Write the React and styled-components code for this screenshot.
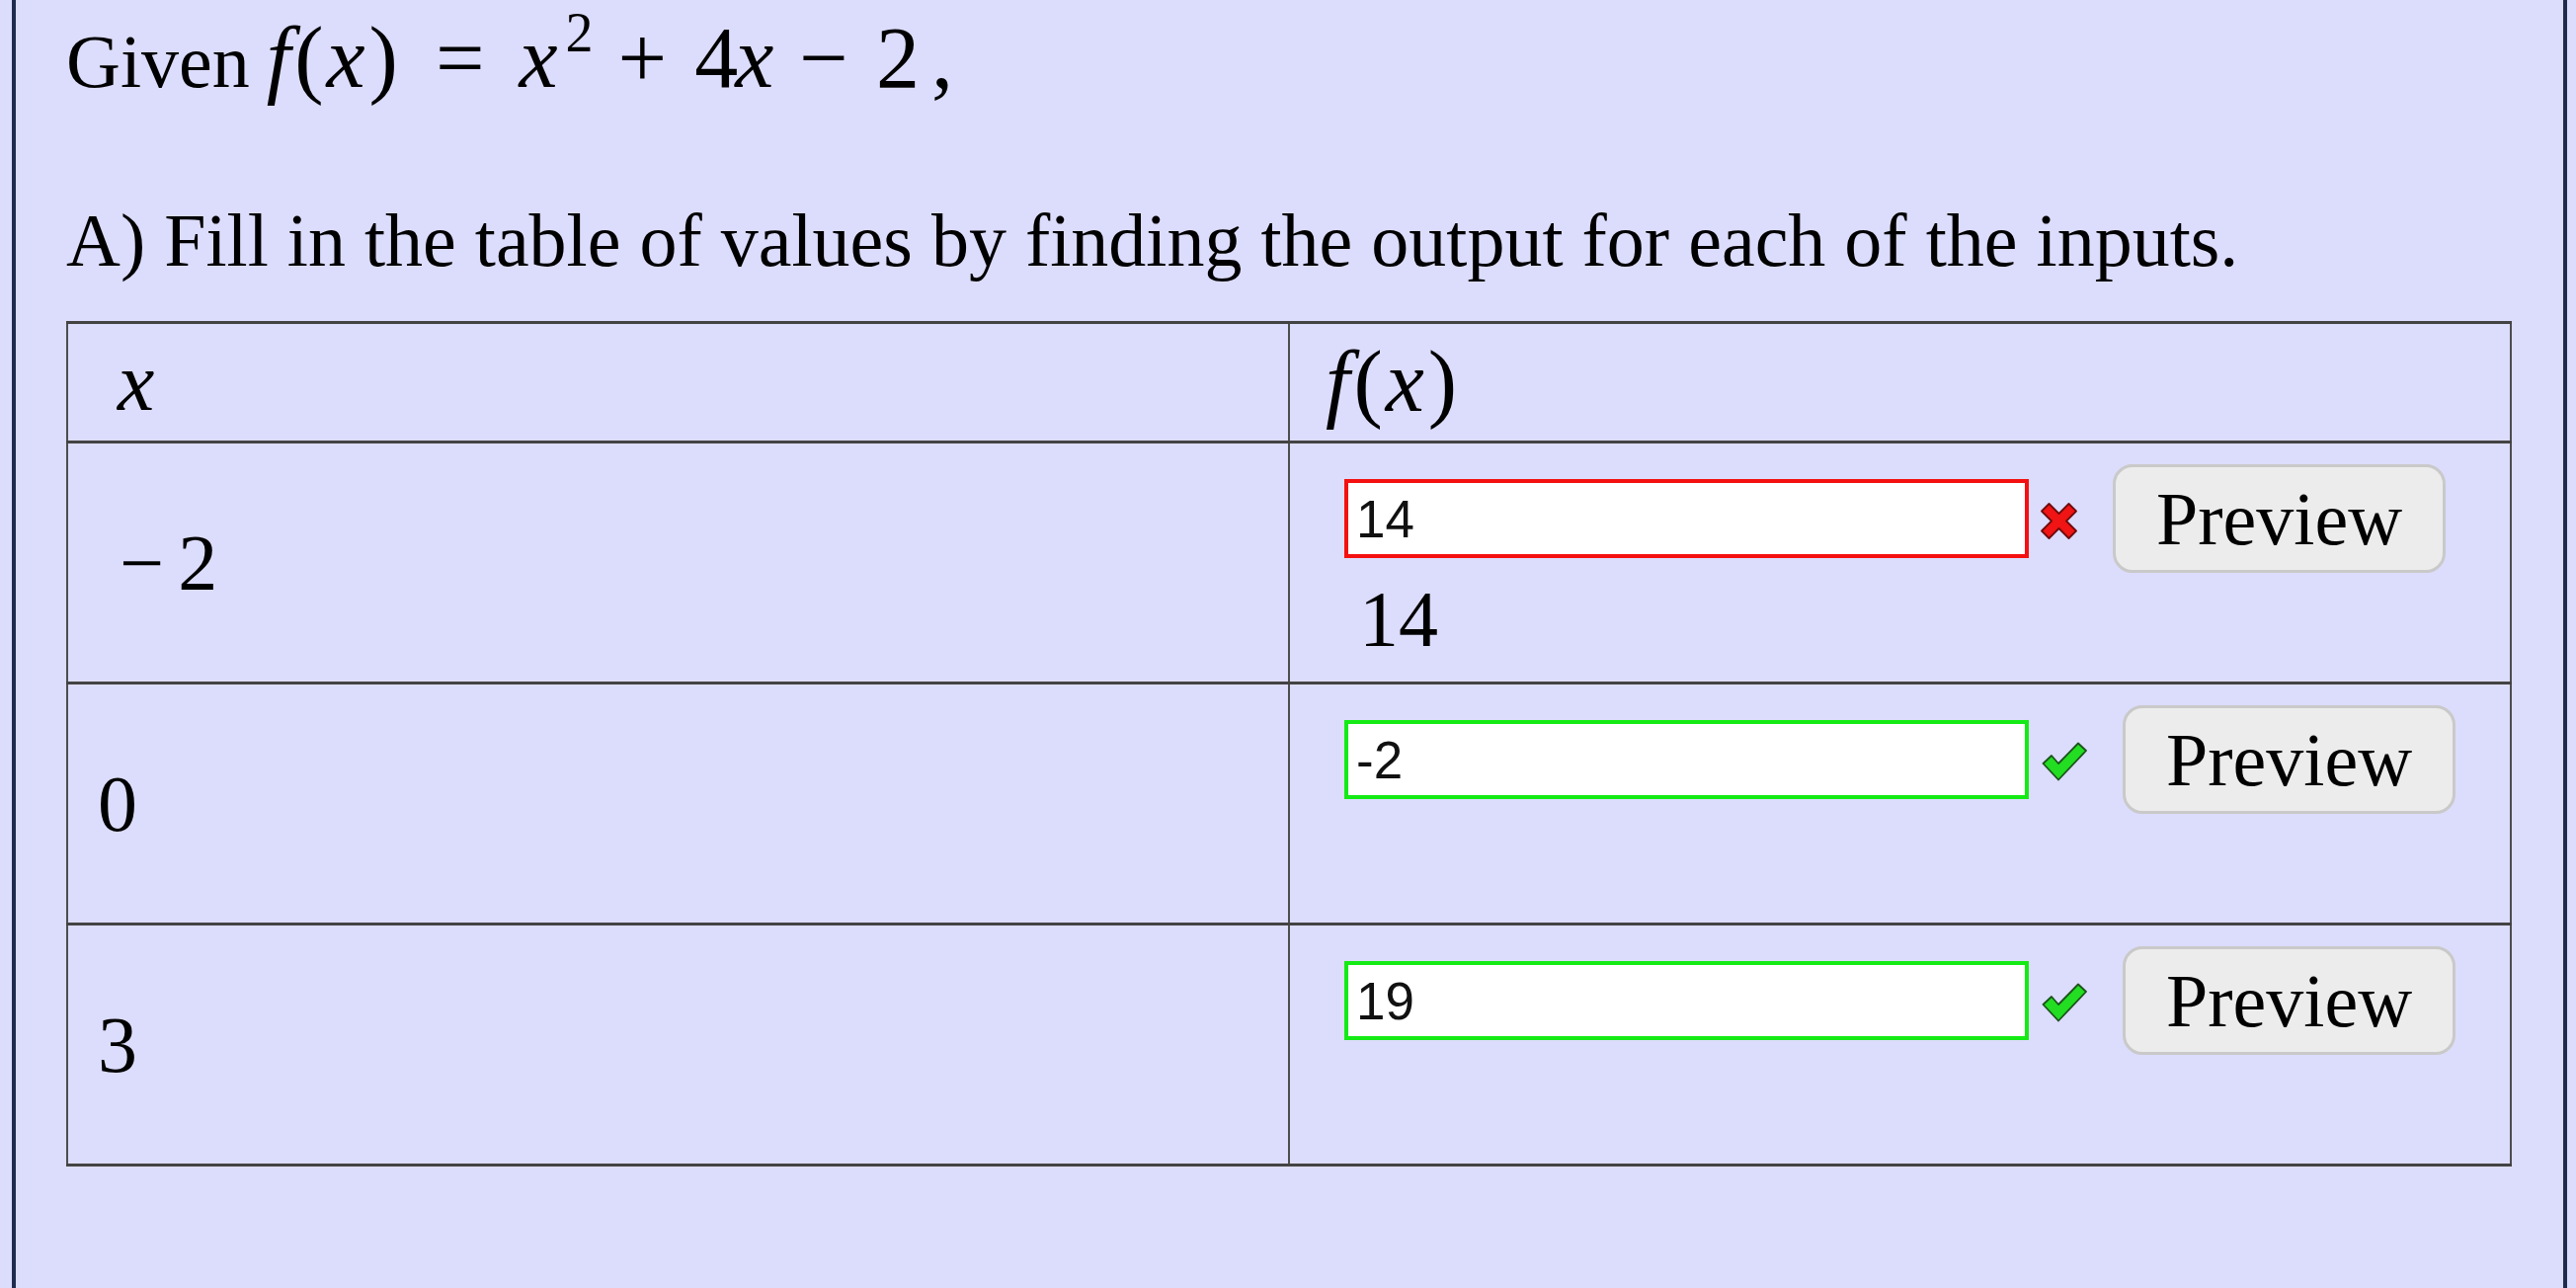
import React from 'react';
import styled, { createGlobalStyle } from 'styled-components';

const GlobalStyle = createGlobalStyle`
  html, body {
    margin: 0;
    padding: 0;
    background: #dcdcfc;
    overflow: hidden;
  }
  body {
    font-family: 'Liberation Serif', 'Times New Roman', serif;
    color: #000;
  }
`;

const rows = [
  { x: '−2', indent: true, value: '14', status: 'wrong', preview: '14' },
  { x: '0', indent: false, value: '-2', status: 'right', preview: '' },
  { x: '3', indent: false, value: '19', status: 'right', preview: '' },
];

export default function App() {
  return (
    <>
      <GlobalStyle />
      <Page>
        <Panel>
          <Para>
            Given{' '}
            <Mi gap={-2}>f</Mi>
            <Mo gap={4}>(</Mo>
            <Mi gap={3}>x</Mi>
            <Mo gap={4}>)</Mo>
            <Mo gap={38}>=</Mo>
            <Mi gap={35}>x</Mi>
            <Sup>2</Sup>
            <Mo gap={25}>+</Mo>
            <Mn gap={28}>4</Mn>
            <Mi gap={-3}>x</Mi>
            <Mo gap={26}>−</Mo>
            <Mn gap={28}>2</Mn>
            <Mo gap={12}>,</Mo>
          </Para>
          <Para spaced>A) Fill in the table of values by finding the output for each of the inputs.</Para>

          <Table>
            <colgroup>
              <col style={{ width: '50%' }} />
              <col style={{ width: '50%' }} />
            </colgroup>
            <thead>
              <tr>
                <HeadCell indent>
                  <Mi size={84}>x</Mi>
                </HeadCell>
                <HeadCell>
                  <Mi gap={6}>f</Mi>
                  <Mo gap={4}>(</Mo>
                  <Mi gap={3}>x</Mi>
                  <Mo gap={4}>)</Mo>
                </HeadCell>
              </tr>
            </thead>
            <tbody>
              {rows.map((r) => (
                <tr key={r.x}>
                  <InputCell indent={r.indent}>
                    {r.x.startsWith('−') ? (
                      <>
                        <Mo size={80}>−</Mo>
                        <Mn size={80} gap={14}>{r.x.slice(1)}</Mn>
                      </>
                    ) : (
                      <Mn size={80}>{r.x}</Mn>
                    )}
                  </InputCell>
                  <AnswerCell>
                    <AnswerLine>
                      <AnswerInput readOnly value={r.value} status={r.status} />
                      <Mark status={r.status}>
                        {r.status === 'wrong' ? <CrossIcon /> : <CheckIcon />}
                      </Mark>
                      <PreviewButton type="button">Preview</PreviewButton>
                    </AnswerLine>
                    <PreviewLine>{r.preview}</PreviewLine>
                  </AnswerCell>
                </tr>
              ))}
            </tbody>
          </Table>
        </Panel>
      </Page>
    </>
  );
}

const CrossIcon = () => (
  <svg width="39" height="39" viewBox="0 0 39 39">
    <polygon
      points="2,9.5 9.5,2 19.5,12 29.5,2 37,9.5 27,19.5 37,29.5 29.5,37 19.5,27 9.5,37 2,29.5 12,19.5"
      fill="#f01414"
      stroke="#6e0a0a"
      strokeWidth="1.8"
      strokeLinejoin="round"
    />
  </svg>
);

const CheckIcon = () => (
  <svg width="46" height="40" viewBox="0 0 46 40">
    <polygon
      points="1.5,22 10,14 17,22 37,1.5 45,9 17,38.5"
      fill="#22dd22"
      stroke="#1b531b"
      strokeWidth="1.8"
      strokeLinejoin="round"
    />
  </svg>
);

const Page = styled.div`
  box-sizing: border-box;
  height: 1304px;
  padding: 0 9px 0 12px;
`;

const Panel = styled.div`
  box-sizing: border-box;
  height: 100%;
  border-left: 4px solid #1e2b4d;
  border-right: 4px solid #1e2b4d;
  padding: 15px 52px 0 51px;
  background: #dcdcfc;
`;

const Para = styled.p`
  margin: ${({ spaced }) => (spaced ? '90px 0 0' : '0')};
  font-size: 76px;
  line-height: 91px;
  white-space: nowrap;
`;

const Mi = styled.span`
  font-style: italic;
  font-size: ${({ size }) => size || 88}px;
  line-height: 1;
  margin-left: ${({ gap }) => gap || 0}px;
`;

const Mn = styled.span`
  font-size: ${({ size }) => size || 88}px;
  line-height: 1;
  margin-left: ${({ gap }) => gap || 0}px;
`;

const Mo = styled.span`
  font-size: ${({ size }) => size || 88}px;
  line-height: 1;
  margin-left: ${({ gap }) => gap || 0}px;
`;

const Sup = styled.span`
  font-size: 56px;
  line-height: 0;
  vertical-align: 36px;
  margin-left: 8px;
`;

const Table = styled.table`
  width: 100%;
  margin-top: 36px;
  border-collapse: collapse;
  table-layout: fixed;
`;

const cellBorders = `
  border-top: 3px solid #434343;
  border-bottom: 3px solid #434343;
  border-left: 2px solid #4d4d4d;
  border-right: 2px solid #4d4d4d;
`;

const HeadCell = styled.th`
  ${cellBorders}
  height: 118px;
  padding: 0 0 0 ${({ indent }) => (indent ? 50 : 30)}px;
  text-align: left;
  font-weight: normal;
  vertical-align: middle;
`;

const InputCell = styled.td`
  ${cellBorders}
  padding: 0 0 0 ${({ indent }) => (indent ? 52 : 30)}px;
  vertical-align: middle;
`;

const AnswerCell = styled.td`
  ${cellBorders}
  padding: 21px 28px 20px 28px;
  vertical-align: top;
`;

const AnswerLine = styled.div`
  display: flex;
  align-items: center;
  margin-left: 27px;
  height: 110px;
`;

const AnswerInput = styled.input`
  box-sizing: border-box;
  width: 693px;
  height: 80px;
  margin: 0;
  padding: 0 8px;
  border: 4px solid ${({ status }) => (status === 'wrong' ? '#f41010' : '#14ea14')};
  border-radius: 0;
  background: #fff;
  font-family: 'Liberation Sans', Arial, sans-serif;
  font-size: 53px;
  color: #111;
  outline: none;
`;

const Mark = styled.span`
  display: flex;
  align-items: center;
  margin-left: ${({ status }) => (status === 'wrong' ? 11 : 13)}px;
  margin-right: ${({ status }) => (status === 'wrong' ? 35 : 36)}px;
  margin-top: 4px;
`;

const PreviewButton = styled.button`
  box-sizing: border-box;
  height: 110px;
  padding: 0 41px;
  margin: 0;
  border: 3px solid #c9c9c9;
  border-radius: 20px;
  background: #ececec;
  font-family: 'Liberation Serif', 'Times New Roman', serif;
  font-size: 76px;
  color: #000;
  cursor: pointer;
`;

const PreviewLine = styled.div`
  box-sizing: border-box;
  height: 90px;
  padding: 4px 0 0 42px;
  font-size: 80px;
  line-height: 86px;
`;
